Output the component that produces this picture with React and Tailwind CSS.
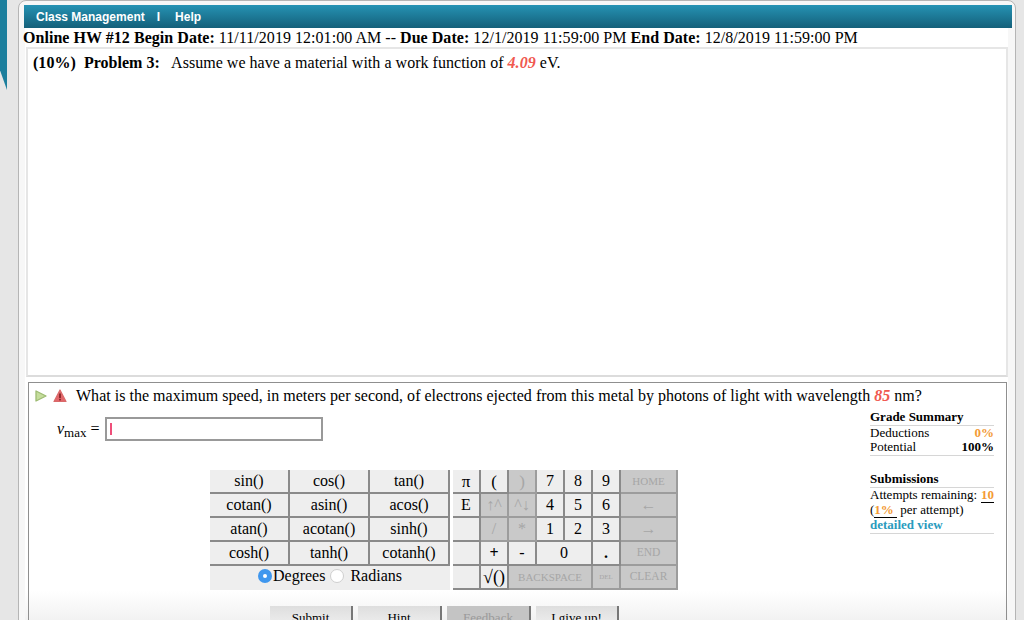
const fnRows = [
  ['sin()', 'cos()', 'tan()'],
  ['cotan()', 'asin()', 'acos()'],
  ['atan()', 'acotan()', 'sinh()'],
  ['cosh()', 'tanh()', 'cotanh()'],
]

function Key({ children, off, className = '' }) {
  return (
    <div
      className={`flex h-[24px] items-center justify-center border-r-2 border-b-2 ${off ? 'border-[#9c9c9c] bg-[#c9c9c9] text-[#a6a6a6]' : 'border-[#8a8a8a] bg-[#eeeeee] text-black'} ${className}`}
    >
      {children}
    </div>
  )
}

function Keypad() {
  return (
    <div className="grid w-[225px] grid-cols-[28px_28px_28px_28px_28px_28px_57px] text-[16px] leading-none">
      <Key className="text-[17px]">π</Key>
      <Key className="text-[17px]">(</Key>
      <Key off className="text-[17px]">)</Key>
      <Key>7</Key>
      <Key>8</Key>
      <Key>9</Key>
      <Key off className="text-[11px]">HOME</Key>

      <Key>E</Key>
      <Key off>↑^</Key>
      <Key off>^↓</Key>
      <Key>4</Key>
      <Key>5</Key>
      <Key>6</Key>
      <Key off>←</Key>

      <Key></Key>
      <Key off>/</Key>
      <Key off>*</Key>
      <Key>1</Key>
      <Key>2</Key>
      <Key>3</Key>
      <Key off>→</Key>

      <Key></Key>
      <Key className="font-bold">+</Key>
      <Key>-</Key>
      <Key className="col-span-2">0</Key>
      <Key className="font-bold">.</Key>
      <Key off className="text-[11.5px]">END</Key>

      <Key></Key>
      <Key className="text-[18px]">√()</Key>
      <Key off className="col-span-3 text-[11px]">BACKSPACE</Key>
      <Key off className="text-[7px]">DEL</Key>
      <Key off className="text-[11.5px]">CLEAR</Key>
    </div>
  )
}

function Radio({ on }) {
  if (on) {
    return (
      <span className="flex h-[14px] w-[14px] items-center justify-center rounded-full bg-[#3f97ee]">
        <span className="h-[4px] w-[4px] rounded-full bg-white" />
      </span>
    )
  }
  return <span className="h-[14px] w-[14px] rounded-full border border-[#cfcfcf] bg-white" />
}

function Button({ children, off }) {
  return (
    <div
      className={`flex h-[26px] items-start justify-center border-r-2 border-[#777777] pt-[2px] text-[13px] ${off ? 'bg-[#c4c4c4] text-[#9a9a9a]' : 'bg-gradient-to-b from-[#dedede] to-[#f4f4f4] text-black'}`}
    >
      {children}
    </div>
  )
}

export default function App() {
  return (
    <div className="relative h-[620px] w-[1024px] overflow-hidden bg-[#e6e6e6] font-['Liberation_Serif',serif] text-black">
      {/* bit of the side tab on the far left */}
      <div className="absolute top-0 left-0 h-[90px] w-[7px] bg-[#1c7f9d] [clip-path:polygon(0_0,100%_0,100%_100%,0_78%)]" />

      <div className="mr-[8px] ml-[18px] h-[640px] rounded-t-[8px] border border-[#b5b5b5] bg-[#f7f7f7] pt-[4px] pr-[3px] pl-[5px]">
        <div className="flex h-[23px] items-center gap-[12px] bg-gradient-to-b from-[#2693b4] to-[#14607a] pl-[12px] font-['Liberation_Sans',sans-serif] text-[12px] font-bold text-white">
          <span>Class Management</span>
          <span>I</span>
          <span className="ml-[3px]">Help</span>
        </div>

        <div className="mr-[4px] ml-[1px] h-[592px] bg-gradient-to-b from-white from-[95%] to-[#f2f2f2]">
          <div className="-ml-[2px] h-[19px] whitespace-nowrap text-[16px] leading-[19px] tracking-[0.04px]">
            <b>Online HW #12 Begin Date:</b> 11/11/2019 12:01:00 AM -- <b>Due Date:</b> 12/1/2019 11:59:00 PM <b>End Date:</b> 12/8/2019 11:59:00 PM
          </div>

          <div className="ml-[1px] h-[330px] border-2 border-[#e6e6e6] border-b-[#dcdcdc] pt-[4px] pl-[5px] text-[16px] leading-[19px] tracking-[0.03px]">
            <b>(10%)</b>&nbsp; <b>Problem 3:</b>&nbsp;&nbsp; Assume we have a material with a work function of{' '}
            <b className="text-[#f0584f] italic">4.09</b> eV.
          </div>

          <div className="mt-[5px] mr-[1px] ml-[3px] h-[260px] border border-[#8f8f8f]">
            <div className="flex h-[26px] items-center pl-[5px] text-[16px] tracking-[0.02px]">
              <svg width="14" height="14" viewBox="0 0 14 14" className="mr-[5px]">
                <path d="M2 2 L12 7 L2 12 Z" fill="#c5dd9c" stroke="#9dbb72" strokeWidth="1.3" strokeLinejoin="round" />
              </svg>
              <svg width="14" height="14" viewBox="0 0 14 14" className="mr-[9px]">
                <path d="M7 1 L13 12.5 L1 12.5 Z" fill="#e2666a" stroke="#d96a6a" strokeWidth="1.2" strokeLinejoin="round" />
                <rect x="6.2" y="4.5" width="1.6" height="4.5" fill="#7a1d20" />
                <rect x="6.2" y="9.8" width="1.6" height="1.6" fill="#7a1d20" />
              </svg>
              <span>
                What is the maximum speed, in meters per second, of electrons ejected from this metal by photons of light with wavelength{' '}
                <b className="font-bold text-[#f0584f] italic">85</b> nm?
              </span>
            </div>

            <div className="flex">
              <div className="w-[841px]">
                <div className="mt-[8px] flex items-center">
                  <div className="ml-[28px] w-[48px] text-[16px]">
                    <i>v</i>
                    <sub className="text-[13px]">max</sub> =
                  </div>
                  <div className="flex h-[24px] w-[218px] items-center border-2 border-[#999999] pl-[3px]">
                    <div className="h-[12px] w-[2px] bg-[#ef4f7a]" />
                  </div>
                </div>

                <div className="mt-[29px] ml-[181px] flex items-start gap-[3px] text-[16px]">
                  <div className="w-[240px]">
                    <div className="grid grid-cols-[80px_80px_80px]">
                      {fnRows.map((row) =>
                        row.map((name) => (
                          <Key key={name} className="pb-[1px]">
                            {name}
                          </Key>
                        )),
                      )}
                    </div>
                    <div className="flex h-[24px] items-center justify-center bg-[#eeeeee] pb-[4px]">
                      <Radio on />
                      <span className="mr-[5px] ml-[1px]">Degrees</span>
                      <Radio />
                      <span className="ml-[6px]">Radians</span>
                    </div>
                  </div>
                  <Keypad />
                </div>

                <div className="mt-[16px] ml-[241px] grid w-[350px] grid-cols-[83px_84px_84px_83px] gap-x-[5px]">
                  <Button>Submit</Button>
                  <Button>Hint</Button>
                  <Button off>Feedback</Button>
                  <Button>I give up!</Button>
                </div>
              </div>

              <div className="w-[124px] text-[13px] leading-[14px]">
                <div className="border-b border-[#d6d6d6] pt-[1px] pb-[1px] font-bold">Grade Summary</div>
                <div className="flex justify-between">
                  <span>Deductions</span>
                  <b className="text-[#f39a34]">0%</b>
                </div>
                <div className="flex justify-between border-b border-[#d6d6d6] pb-[1px]">
                  <span>Potential</span>
                  <b>100%</b>
                </div>
                <div className="mt-[16px] border-b border-[#d6d6d6] pb-[1px] font-bold">Submissions</div>
                <div className="flex justify-between">
                  <span>Attempts remaining:</span>
                  <b className="border-b border-black text-[#f39a34]">10</b>
                </div>
                <div>
                  (<b className="border-b border-black text-[#f39a34]">1%&nbsp;</b> per attempt)
                </div>
                <div className="border-b border-[#d6d6d6] pt-[1px] pb-[1px] font-bold text-[#2a9bbd]">detailed view</div>
              </div>
            </div>
          </div>
        </div>
      </div>
    </div>
  )
}
